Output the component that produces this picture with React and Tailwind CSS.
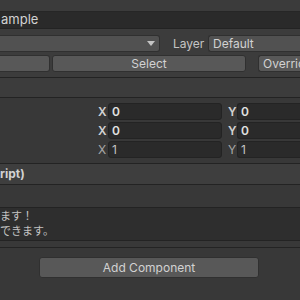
import React from "react";

const font = { fontFamily: '"Inter", "Noto Sans CJK JP", sans-serif' };

const Vec = ({ x, y, dim }) => (
  <div className="flex h-[17px] items-center">
    <div className="w-[98px] shrink-0" />
    <span className={`w-[10px] shrink-0 text-[12px] ${dim ? "text-[#a8a8a8]" : "font-semibold text-[#d2d2d2]"}`}>X</span>
    <div className="flex h-full w-[114px] shrink-0 items-center rounded-[3px] border border-[#232323] bg-[#2a2a2a] pl-[3px]">
      <span className={`text-[12px] ${dim ? "text-[#c4c4c4]" : "font-semibold text-[#e0e0e0]"}`}>{x}</span>
    </div>
    <span className={`ml-[6px] w-[9px] shrink-0 text-[12px] ${dim ? "text-[#a8a8a8]" : "font-semibold text-[#d2d2d2]"}`}>Y</span>
    <div className="flex h-full min-w-0 flex-1 items-center rounded-l-[3px] border border-r-0 border-[#232323] bg-[#2a2a2a] pl-[3px]">
      <span className={`text-[12px] ${dim ? "text-[#c4c4c4]" : "font-semibold text-[#e0e0e0]"}`}>{y}</span>
    </div>
  </div>
);

export default function App() {
  return (
    <div className="h-[300px] w-[300px] overflow-hidden bg-[#383838] text-[#c4c4c4]" style={font}>
      <div className="h-[12px] bg-[#3b3b3b] border-b border-[#262626]" />
      <div className="bg-[#3c3c3c] pb-[5px]">
        <div className="flex h-[17px] items-center bg-[#2a2a2a] border-b border-[#232323]">
          <span className="ml-[1px] text-[13px] text-[#d2d2d2]">ample</span>
        </div>
        <div className="mt-[6px] flex h-[17px] items-center">
          <div className="flex h-full w-[160px] shrink-0 items-center justify-end rounded-r-[3px] border border-l-0 border-[#303030] bg-[#515151] pr-[4px]">
            <svg width="8" height="5" viewBox="0 0 8 5"><path d="M0 0h8L4 5z" fill="#c4c4c4" /></svg>
          </div>
          <span className="ml-[13px] w-[35px] shrink-0 text-[12px]">Layer</span>
          <div className="flex h-full min-w-0 flex-1 items-center rounded-l-[3px] border border-r-0 border-[#303030] bg-[#515151] pl-[4px] text-[12px] text-[#d2d2d2]">
            Default
          </div>
        </div>
        <div className="mt-[3px] flex h-[17px] items-center">
          <div className="h-full w-[50px] shrink-0 rounded-r-[3px] border border-l-0 border-[#303030] bg-[#585858]" />
          <div className="ml-[2px] flex h-full w-[194px] shrink-0 items-center justify-center rounded-[3px] border border-[#303030] bg-[#585858] text-[12px] text-[#d2d2d2]">
            Select
          </div>
          <div className="ml-[12px] flex h-full min-w-0 flex-1 items-center rounded-l-[3px] border border-r-0 border-[#303030] bg-[#585858] pl-[4px] text-[12px] text-[#d2d2d2]">
            Overrid
          </div>
        </div>
      </div>
      <div className="h-[21px] border-y border-[#232323] bg-[#3c3c3c]" />
      <div className="flex flex-col gap-[2px] pt-[5px] pb-[5px]">
        <Vec x="0" y="0" />
        <Vec x="0" y="0" />
        <Vec x="1" y="1" dim />
      </div>
      <div className="flex h-[22px] items-center border-y border-[#232323] bg-[#3e3e3e]">
        <span className="text-[12px] font-bold text-[#d2d2d2]">ript)</span>
      </div>
      <div className="h-[22px]" />
      <div className="flex h-[34px] flex-col justify-center border-y border-[#232323] bg-[#2e2e2e] text-[11px] leading-[15px] text-[#c4c4c4]">
        <span>ます！</span>
        <span>できます。</span>
      </div>
      <div className="mt-[6px] h-[1px] bg-[#232323]" />
      <div className="mt-[9px] flex justify-center">
        <div className="ml-[-2px] flex h-[21px] w-[220px] items-center justify-center rounded-[3px] border border-[#303030] bg-[#585858] text-[12px] text-[#d2d2d2]">
          Add Component
        </div>
      </div>
    </div>
  );
}
